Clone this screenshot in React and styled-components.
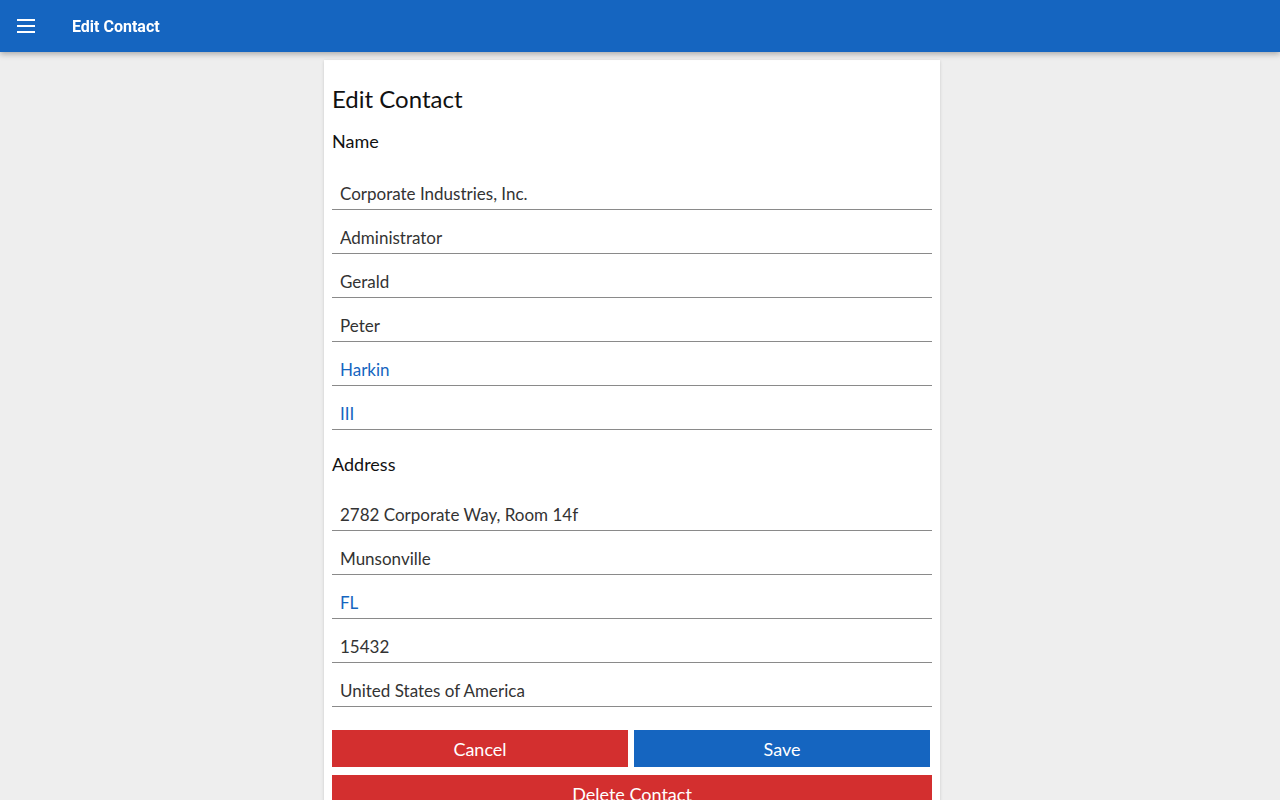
import React from "react";
import styled, { createGlobalStyle } from "styled-components";

const Global = createGlobalStyle`
  body { margin: 0; background: #eeeeee; font-family: "Lato", "Open Sans", sans-serif; }
`;

const AppBar = styled.header`
  position: fixed; top: 0; left: 0; right: 0; height: 52px;
  background: #1565c0; color: #fff; display: flex; align-items: center;
  box-shadow: 0 2px 6px rgba(0,0,0,0.3); z-index: 2;
  font-family: Roboto, sans-serif;
`;
const Menu = styled.button`
  width: 52px; height: 52px; border: 0; background: none; color: #fff;
  display: flex; align-items: center; justify-content: center; margin-right: 20px;
`;
const Title = styled.div` font-size: 16px; font-weight: 700; `;

const Main = styled.main` padding: 60px 16px 0 0; display: flex; justify-content: center; `;
const Card = styled.section`
  width: 600px; background: #fff; padding: 24px 8px 40px;
  box-shadow: 0 1px 3px rgba(0,0,0,0.15);
`;
const H1 = styled.h1` margin: 0 0 17px; font-size: 24px; font-weight: 400; color: #111; `;
const H2 = styled.h2` margin: 0 0 ${(p) => p.mb}px; font-size: 18px; font-weight: 400; color: #111; `;
const Fields = styled.div` display: flex; flex-direction: column; margin-bottom: ${(p) => p.mb}px; `;
const Input = styled.input`
  height: 44px; box-sizing: border-box; border: 0; border-bottom: 1px solid #8a8a8a;
  padding: 12px 8px 0; font: inherit; font-size: 17px; color: ${(p) => (p.blue ? "#1565c0" : "#333")};
  outline: none; background: none;
`;
const Row = styled.div` display: grid; grid-template-columns: 1fr 1fr; gap: 6px; margin: 23px 2px 8px 0; `;
const Button = styled.button`
  height: 37px; border: 0; color: #fff; font: inherit; font-size: 18px;
  background: ${(p) => (p.primary ? "#1565c0" : "#d32f2f")}; width: 100%;
`;

export default function App() {
  const name = ["Corporate Industries, Inc.", "Administrator", "Gerald", "Peter", "Harkin", "III"];
  const addr = ["2782 Corporate Way, Room 14f", "Munsonville", "FL", "15432", "United States of America"];
  return (
    <>
      <Global />
      <AppBar>
        <Menu>
          <svg width="20" height="14" viewBox="0 0 20 14"><path d="M1 1h18M1 7h18M1 13h18" stroke="#fff" strokeWidth="2" /></svg>
        </Menu>
        <Title>Edit Contact</Title>
      </AppBar>
      <Main>
        <Card>
          <H1>Edit Contact</H1>
          <H2 mb={14}>Name</H2>
          <Fields mb={23}>
            {name.map((v, i) => <Input key={i} defaultValue={v} blue={i >= 4} />)}
          </Fields>
          <H2 mb={12}>Address</H2>
          <Fields mb={0}>
            {addr.map((v, i) => <Input key={i} defaultValue={v} blue={i === 2} />)}
          </Fields>
          <Row>
            <Button>Cancel</Button>
            <Button primary>Save</Button>
          </Row>
          <Button>Delete Contact</Button>
        </Card>
      </Main>
    </>
  );
}
